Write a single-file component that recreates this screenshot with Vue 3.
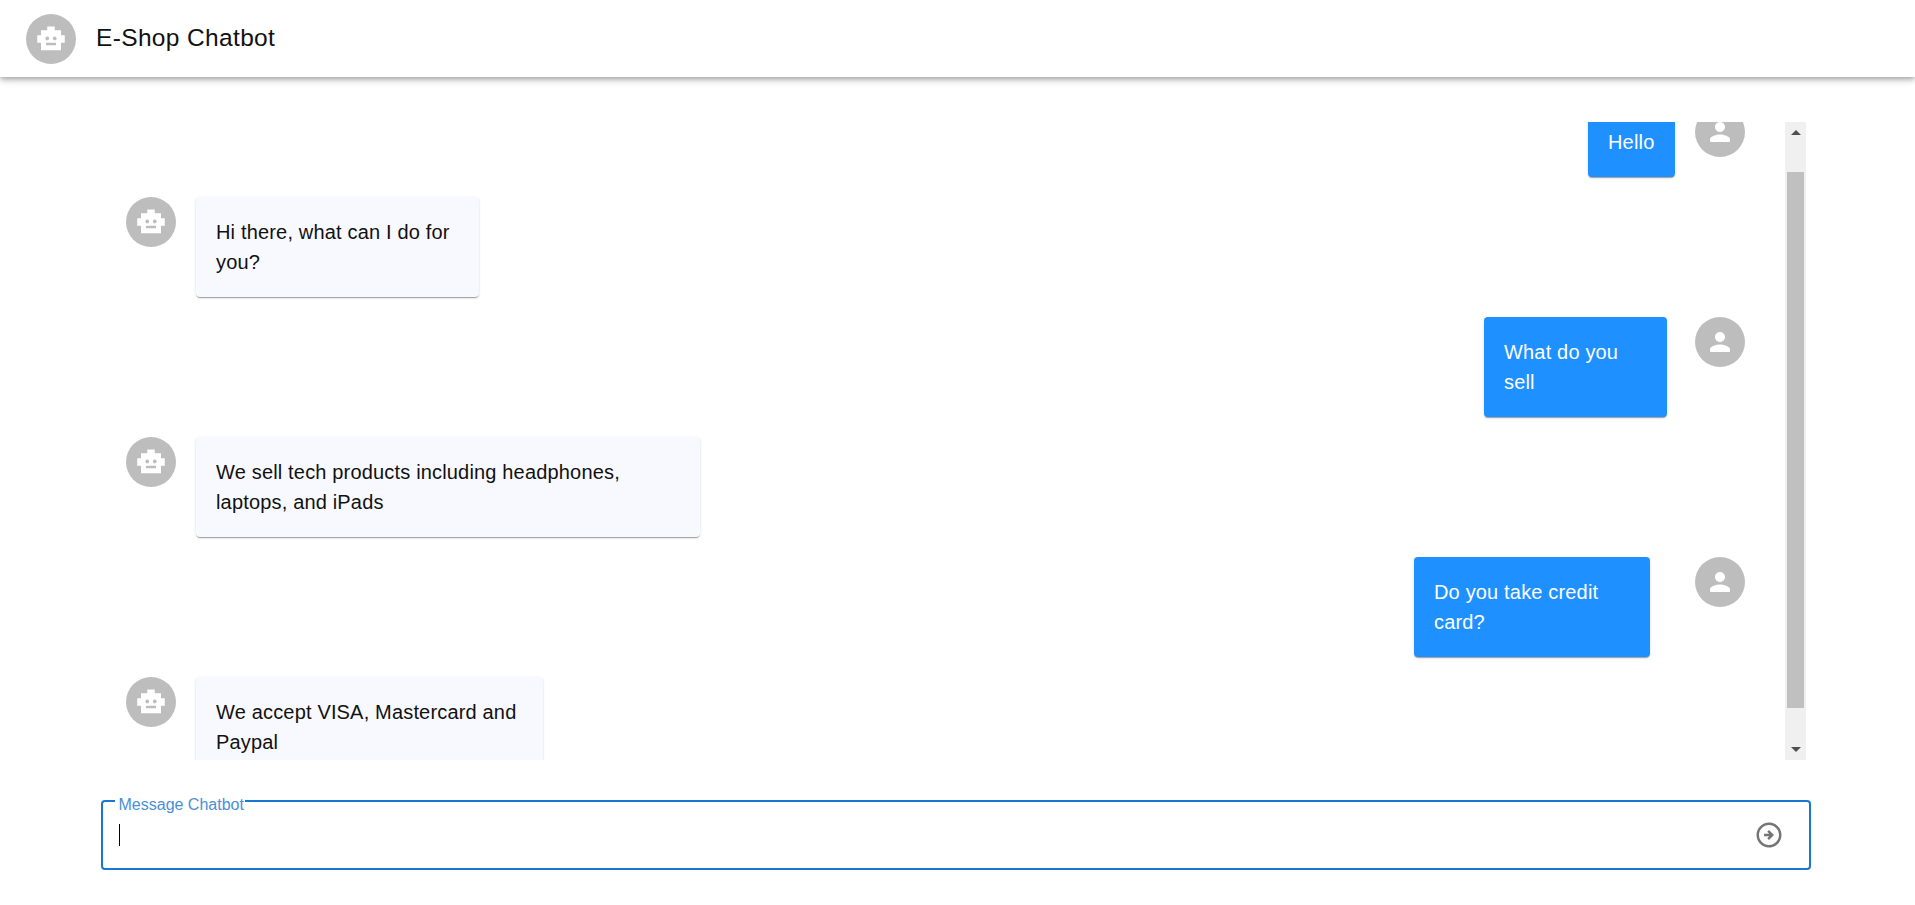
<script setup>
const robot = 'M20 9V5h-5V2H9v3H4v4H1v6h3v6h16v-6h3V9h-3zM7.5 11.5c0-.83.67-1.5 1.5-1.5s1.5.67 1.5 1.5S9.83 13 9 13s-1.5-.67-1.5-1.5zM16 17H8v-2h8v2zm-1-4c-.83 0-1.5-.67-1.5-1.5S14.17 10 15 10s1.5.67 1.5 1.5S15.83 13 15 13z'
const person = 'M12 12c2.21 0 4-1.79 4-4s-1.79-4-4-4-4 1.79-4 4 1.79 4 4 4zm0 2c-2.67 0-8 1.34-8 4v1c0 .55.45 1 1 1h14c.55 0 1-.45 1-1v-1c0-2.66-5.33-4-8-4z'
const send = 'M22 12c0-5.52-4.48-10-10-10S2 6.48 2 12s4.48 10 10 10 10-4.48 10-10zM4 12c0-4.42 3.58-8 8-8s8 3.58 8 8-3.58 8-8 8-8-3.58-8-8zm12 0-4 4-1.41-1.41L12.17 13H8v-2h4.17l-1.59-1.59L12 8l4 4z'

const messages = [
  { id: 1, from: 'user', text: 'Hello', width: 87, gap: 20 },
  { id: 2, from: 'bot', text: 'Hi there, what can I do for\nyou?', width: 283, gap: 20 },
  { id: 3, from: 'user', text: 'What do you\nsell', width: 183, gap: 28 },
  { id: 4, from: 'bot', text: 'We sell tech products including headphones,\nlaptops, and iPads', width: 504, gap: 20 },
  { id: 5, from: 'user', text: 'Do you take credit\ncard?', width: 236, gap: 45 },
  { id: 6, from: 'bot', text: 'We accept VISA, Mastercard and\nPaypal', width: 347, gap: 20 }
]
</script>

<template>
  <div class="page">
    <header class="app-bar">
      <div class="avatar">
        <svg class="icon" viewBox="0 0 24 24"><path :d="robot" /></svg>
      </div>
      <h1 class="title">E-Shop Chatbot</h1>
    </header>

    <main class="main">
      <section class="chat">
        <div class="viewport">
          <div class="list">
            <div
              v-for="m in messages"
              :key="m.id"
              class="row"
              :class="m.from"
              :style="{ gap: m.gap + 'px' }"
            >
              <div class="avatar">
                <svg class="icon" viewBox="0 0 24 24"><path :d="m.from === 'bot' ? robot : person" /></svg>
              </div>
              <div class="bubble" :style="{ width: m.width + 'px' }">{{ m.text }}</div>
            </div>
          </div>
        </div>
        <div class="scrollbar" aria-hidden="true">
          <div class="arrow up"></div>
          <div class="thumb"></div>
          <div class="arrow down"></div>
        </div>
      </section>

      <form class="composer" @submit.prevent>
        <fieldset class="outline">
          <legend class="legend"><span class="label">Message Chatbot</span></legend>
        </fieldset>
        <span class="caret"></span>
        <svg class="send" viewBox="0 0 24 24"><path :d="send" /></svg>
      </form>
    </main>
  </div>
</template>

<style>
html, body { margin: 0; background: #fff; overflow: hidden; }
</style>

<style scoped>
.page {
  width: 1915px;
  height: 905px;
  display: flex;
  flex-direction: column;
  font-family: "Liberation Sans", Arial, sans-serif;
  color: #000;
  background: #fff;
}
.app-bar {
  height: 77px;
  flex: none;
  display: flex;
  align-items: center;
  gap: 20px;
  padding-left: 26px;
  box-sizing: border-box;
  background: #fff;
  box-shadow: 0 2px 4px -1px rgba(0,0,0,.2), 0 4px 5px 0 rgba(0,0,0,.14), 0 1px 10px 0 rgba(0,0,0,.12);
}
.title {
  margin: 0 0 2px;
  font-size: 24.5px;
  font-weight: 400;
  letter-spacing: .35px;
  color: #111;
}
.avatar {
  width: 50px;
  height: 50px;
  flex: none;
  border-radius: 50%;
  background: #bdbdbd;
  display: flex;
  align-items: center;
  justify-content: center;
}
.icon { width: 30px; height: 30px; fill: #fff; display: block; }
.main {
  flex: 1;
  display: flex;
  flex-direction: column;
  padding: 45px 104px 0 101px;
  min-height: 0;
}
.chat {
  height: 638px;
  flex: none;
  display: flex;
  padding-right: 5px;
}
.viewport { flex: 1; min-width: 0; overflow: hidden; }
.list {
  margin-top: -15px;
  padding: 0 40px 0 25px;
  display: flex;
  flex-direction: column;
  gap: 20px;
}
.row { display: flex; align-items: flex-start; }
.row.user { flex-direction: row-reverse; }
.bubble {
  box-sizing: border-box;
  padding: 20px;
  font-size: 20px;
  line-height: 30px;
  letter-spacing: .17px;
  border-radius: 4px;
  white-space: pre-line;
  box-shadow: 0 2px 1px -1px rgba(0,0,0,.2), 0 1px 1px 0 rgba(0,0,0,.14), 0 1px 3px 0 rgba(0,0,0,.12);
}
.bot .bubble { background: #f8f9fe; color: #111; }
.user .bubble { background: #1e90ff; color: #fff; }
.scrollbar {
  width: 21px;
  flex: none;
  background: #f0f0f0;
  display: flex;
  flex-direction: column;
  align-items: center;
  justify-content: space-between;
  position: relative;
}
.thumb {
  position: absolute;
  left: 2px;
  right: 2px;
  top: 50px;
  height: 536px;
  background: #c0c0c0;
}
.arrow { width: 0; height: 0; border-left: 5px solid transparent; border-right: 5px solid transparent; }
.arrow.up { margin-top: 8px; border-bottom: 5px solid #505050; }
.arrow.down { margin-bottom: 8px; border-top: 5px solid #505050; }
.composer {
  position: relative;
  height: 70px;
  flex: none;
  margin-top: 40px;
}
.outline {
  position: absolute;
  inset: -7px 0 0 0;
  margin: 0;
  padding: 0 12px;
  border: 2px solid #1976d2;
  border-radius: 4px;
  min-width: 0;
}
.legend {
  padding: 0 1px 0 4px;
  font-size: 16px;
  line-height: 15px;
  white-space: nowrap;
}
.label {
  position: relative;
  top: 4px;
  left: -.5px;
  color: #4a8fd8;
}
.caret {
  position: absolute;
  left: 18px;
  top: 24px;
  width: 1px;
  height: 22px;
  background: #000;
}
.send {
  position: absolute;
  right: 27px;
  top: 20px;
  width: 30px;
  height: 30px;
  fill: #757575;
}
</style>
